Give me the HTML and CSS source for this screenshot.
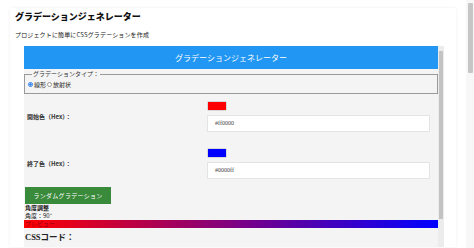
FILE: index.html
```html
<!DOCTYPE html>
<html lang="ja">

<head>
    <meta charset="UTF-8">
    <meta name="viewport" content="width=device-width">
    <title>グラデーションジェネレーター</title>
    <link rel="stylesheet" href="styles.css">
</head>

<body>
    <div class="page">
        <div class="card">
            <h1>グラデーションジェネレーター</h1>
            <p class="lead">プロジェクトに簡単にCSSグラデーションを作成</p>

            <div class="frame">
                <div class="frame-body">
                    <header class="app-head">グラデーションジェネレーター</header>

                    <fieldset class="type">
                        <legend>グラデーションタイプ：</legend>
                        <label><span class="radio on"></span>線形</label>
                        <label><span class="radio"></span>放射状</label>
                    </fieldset>

                    <div class="color-row">
                        <span class="color-label">開始色（Hex）：</span>
                        <div class="color-ctrl">
                            <span class="swatch"><span class="red"></span></span>
                            <div class="hex">#ff0000</div>
                        </div>
                    </div>

                    <div class="color-row">
                        <span class="color-label">終了色（Hex）：</span>
                        <div class="color-ctrl">
                            <span class="swatch"><span class="blue"></span></span>
                            <div class="hex">#0000ff</div>
                        </div>
                    </div>

                    <button class="random">ランダムグラデーション</button>

                    <div class="angle">
                        <div class="angle-title">角度調整</div>
                        <div class="angle-value">角度：90°</div>
                    </div>

                    <div class="preview">プレビュー</div>

                    <h3 class="code-title">CSSコード：</h3>
                </div>
                <!-- barre de défilement du cadre -->
                <div class="bar inner-bar"><div class="thumb"></div></div>
            </div>
        </div>
    </div>
    <!-- barre de défilement de la page -->
    <div class="bar page-bar"><div class="thumb"></div></div>
</body>

</html>
```

FILE: styles.css
```css
* {
    box-sizing: border-box;
}

body {
    margin: 0;
    height: 248px;
    overflow: hidden;
    display: flex;
    background: #fff;
    font-family: "Noto Sans CJK JP", sans-serif;
    color: #222;
}

.page {
    flex: 1;
    min-width: 0;
}

/*********************/
/* Les barres de défilement */
/*********************/
.bar {
    display: flex;
    flex-direction: column;
}

.page-bar {
    width: 8px;
    padding: 3px 1px 0 2px;
    background: #f7f7f7;
}

.page-bar .thumb {
    height: 70px;
    background: #c6c6c6;
    border-radius: 1px;
}

.inner-bar {
    width: 6px;
    padding: 5px 1px 0 1px;
    background: #ececec;
}

.inner-bar .thumb {
    height: 168px;
    background: #c3c3c3;
}

/*********************/
/* La carte de la page */
/*********************/
.card {
    margin: 8px 10px 0 10px;
    padding: 3px 12px 0 5px;
    box-shadow: 0 0 3px rgba(0, 0, 0, 0.07);
}

h1 {
    margin: 0 0 7px;
    font-size: 9px;
    line-height: 12px;
    font-weight: 900;
    color: #111;
}

.lead {
    margin: 0 0 7px;
    font-size: 6px;
    line-height: 9px;
    letter-spacing: 0.15px;
}

/*********************/
/* Le cadre de l'outil */
/*********************/
.frame {
    display: flex;
    height: 201px;
    margin-left: 9px;
    overflow: hidden;
    background: #f4f4f4;
}

.frame-body {
    flex: 1;
    min-width: 0;
}

.app-head {
    height: 23px;
    line-height: 23px;
    background: #2196f3;
    color: #fff;
    text-align: center;
    font-size: 8px;
}

.type {
    margin: 2px 0 0;
    padding: 3px 4px 4px 3px;
    border: 1px solid #9a9a9a;
    font-size: 6px;
    line-height: 9px;
    display: flex;
    gap: 1px;
}

.type legend {
    padding: 0 1px;
    margin-left: 4px;
    line-height: 6px;
    color: #333;
}

.type label {
    display: flex;
    align-items: center;
    gap: 1px;
}

.radio {
    width: 5px;
    height: 5px;
    border-radius: 50%;
    border: 1px solid #999;
    background: #fff;
}

.radio.on {
    border-color: #2b7de9;
    background: radial-gradient(#2b7de9 45%, #fff 55%);
}

/*********************/
/* Les couleurs */
/*********************/
.color-row {
    display: flex;
    align-items: center;
    margin-top: 7px;
}

.color-row+.color-row {
    margin-top: 16px;
}

.color-label {
    width: 183px;
    padding-left: 3px;
    font-size: 6px;
    font-weight: bold;
    color: #333;
}

.color-ctrl {
    display: flex;
    flex-direction: column;
    gap: 4px;
}

.swatch {
    width: 20px;
    height: 10px;
    padding: 1px;
    background: #d8d8d8;
    border-radius: 2px;
    display: flex;
}

.swatch span {
    flex: 1;
}

.red {
    background: #f00;
}

.blue {
    background: #00f;
}

.hex {
    width: 223px;
    height: 17px;
    line-height: 15px;
    padding-left: 7px;
    background: #fff;
    border: 1px solid #e4e4e4;
    font-family: "Liberation Serif", serif;
    font-size: 6px;
    color: #444;
}

/*********************/
/* Le bas de l'outil */
/*********************/
.random {
    display: block;
    margin: 8px 0 0 1px;
    width: 86px;
    height: 17px;
    border: none;
    background: #3a8a3c;
    color: #fff;
    font-family: "Noto Sans CJK JP", sans-serif;
    font-size: 6px;
    letter-spacing: 0.3px;
    padding: 0;
}

.angle {
    margin-left: 1px;
    font-size: 6px;
    line-height: 8px;
}

.angle-title {
    font-weight: bold;
}

.preview {
    height: 8px;
    line-height: 8px;
    padding-left: 1px;
    font-size: 6px;
    color: #8a0010;
    background: linear-gradient(90deg, #f00, #00f);
}

.code-title {
    margin: 3px 0 0 1px;
    font-family: "Liberation Serif", "Noto Sans CJK JP", serif;
    font-size: 8.5px;
    line-height: 12px;
}
```
